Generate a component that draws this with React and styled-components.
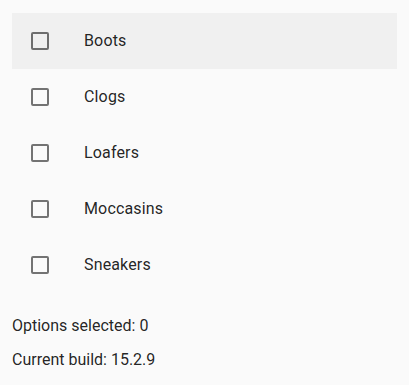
import React, { useState } from 'react';
import styled, { createGlobalStyle } from 'styled-components';

const items = ['Boots', 'Clogs', 'Loafers', 'Moccasins', 'Sneakers'];

export default function App() {
  const [checked, setChecked] = useState([]);
  const [hover, setHover] = useState(0);

  const toggle = (name) => {
    setChecked((prev) =>
      prev.includes(name) ? prev.filter((n) => n !== name) : [...prev, name]
    );
  };

  return (
    <>
      <GlobalStyle />
      <Page>
        <List>
          {items.map((name, index) => (
            <Row
              key={name}
              $active={hover === index}
              onMouseEnter={() => setHover(index)}
              onClick={() => toggle(name)}
            >
              <IconCell>
                <Box $checked={checked.includes(name)} />
              </IconCell>
              <Label>{name}</Label>
            </Row>
          ))}
        </List>
        <Footer>
          <Info>Options selected: {checked.length}</Info>
          <Info>Current build: 15.2.9</Info>
        </Footer>
      </Page>
    </>
  );
}

// Styles
const GlobalStyle = createGlobalStyle`
  body {
    margin: 0;
    background: #fafafa;
    font-family: Roboto, "Liberation Sans", sans-serif;
    color: rgba(0, 0, 0, 0.87);
  }
`;
const Page = styled.div`
  padding: 5px 12px 0;
`;
const List = styled.ul`
  list-style: none;
  margin: 0;
  padding: 8px 0;
  width: 385px;
`;
const Row = styled.li`
  display: flex;
  align-items: center;
  height: 56px;
  padding: 0 16px;
  box-sizing: border-box;
  cursor: pointer;
  background: ${(p) => (p.$active ? '#f0f0f0' : 'transparent')};
`;
const IconCell = styled.div`
  min-width: 56px;
  display: flex;
  align-items: center;
`;
const Box = styled.span`
  display: block;
  width: 18px;
  height: 18px;
  margin: 3px;
  box-sizing: border-box;
  border: 2px solid rgba(0, 0, 0, 0.54);
  border-radius: 2px;
  background: ${(p) => (p.$checked ? 'rgba(0,0,0,0.54)' : 'transparent')};
`;
const Label = styled.span`
  font-size: 16px;
  line-height: 24px;
  letter-spacing: 0.15px;
`;
const Footer = styled.div`
  display: flex;
  flex-direction: column;
  gap: 10px;
  margin-top: 13px;
`;
const Info = styled.p`
  margin: 0;
  font-size: 16px;
  line-height: 24px;
`;
